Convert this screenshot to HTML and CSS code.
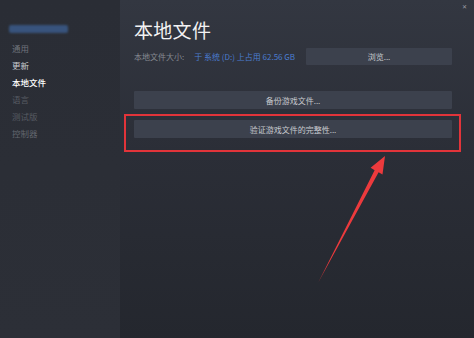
FILE: index.html
```html
<!DOCTYPE html>
<html lang="zh-CN">
<head>
<meta charset="utf-8">
<title>本地文件</title>
<link rel="stylesheet" href="styles.css">
</head>
<body>
<div class="window">
  <aside class="sidebar">
    <div class="game-name"></div>
    <nav class="nav">
      <div class="nav-item dim">通用</div>
      <div class="nav-item light">更新</div>
      <div class="nav-item active">本地文件</div>
      <div class="nav-item faint">语言</div>
      <div class="nav-item faint">测试版</div>
      <div class="nav-item dim2">控制器</div>
    </nav>
  </aside>
  <main class="main">
    <div class="close">&#x2715;</div>
    <h1 class="title">本地文件</h1>
    <div class="info-row">
      <span class="label">本地文件大小:</span>
      <span class="size">于 系统 (D:) 上占用 62.56 GB</span>
      <button class="btn browse">浏览...</button>
    </div>
    <button class="btn wide backup">备份游戏文件...</button>
    <div class="highlight">
      <button class="btn wide">验证游戏文件的完整性...</button>
    </div>
  </main>
  <svg class="arrow" width="474" height="338" viewBox="0 0 474 338">
    <polygon points="385,156 382.5,174.5 378.6,172.2 318.5,282 374.6,170.2 370.6,167.8" fill="#ec3a3d"/>
  </svg>
</div>
</body>
</html>
```

FILE: styles.css
```css
* { box-sizing: border-box; }
html, body {
  margin: 0;
  padding: 0;
  width: 474px;
  height: 338px;
  overflow: hidden;
  background: #2b2f37;
  font-family: "Noto Sans CJK SC", "Noto Sans", sans-serif;
}
.window {
  position: relative;
  display: flex;
  width: 474px;
  height: 338px;
}
.sidebar {
  width: 120px;
  flex: none;
  background: linear-gradient(180deg, #2a2d35 0%, #2c2f37 100%);
  padding: 25px 0 0 9px;
}
.game-name {
  width: 59px;
  height: 8px;
  background: #38537c;
  filter: blur(1.2px);
  border-radius: 2px;
}
.nav {
  display: flex;
  flex-direction: column;
  padding-top: 7px;
  padding-left: 3px;
}
.nav-item {
  font-size: 8.5px;
  line-height: 17px;
  height: 17px;
  white-space: nowrap;
}
.nav-item.dim { color: #6f737b; }
.nav-item.light { color: #c9cbcf; }
.nav-item.active { color: #ffffff; font-weight: 500; }
.nav-item.faint { color: #575b63; }
.nav-item.dim2 { color: #62666e; }
.main {
  position: relative;
  flex: 1;
  background: linear-gradient(180deg, #333741 0%, #2b2e37 45%, #24272e 100%);
  padding: 18px 22px 0 14px;
  display: flex;
  flex-direction: column;
}
.close {
  position: absolute;
  top: 1px;
  right: 7px;
  font-size: 6px;
  line-height: 10px;
  color: #9a9da4;
  font-family: "DejaVu Sans", sans-serif;
  padding-top: 1px;
}
.title {
  margin: 0;
  font-size: 19px;
  line-height: 23px;
  font-weight: 400;
  color: #f2f2f3;
  letter-spacing: 0.3px;
}
.info-row {
  display: flex;
  align-items: center;
  margin-top: 7px;
  height: 17px;
}
.label {
  font-size: 8px;
  color: #868a91;
  white-space: nowrap;
}
.size {
  font-size: 8px;
  color: #4b7dd0;
  margin-left: 10px;
  white-space: nowrap;
}
.btn {
  border: none;
  margin: 0;
  padding: 0;
  background: #3c414d;
  color: #c8cace;
  font-family: "Noto Sans CJK SC", "Noto Sans", sans-serif;
  font-size: 8px;
  line-height: 17px;
  height: 17px;
  border-radius: 1px;
  display: flex;
  align-items: center;
  justify-content: center;
}
.browse {
  margin-left: auto;
  width: 146px;
  height: 17px;
}
.wide {
  width: 100%;
  height: 18px;
}
.backup {
  margin-top: 26px;
}
.highlight {
  margin-top: 5px;
  margin-left: -10px;
  margin-right: -9px;
  border: 2px solid #e2343a;
  padding: 4px 7px 12px 8px;
}
.arrow {
  position: absolute;
  left: 0;
  top: 0;
  pointer-events: none;
}
```
